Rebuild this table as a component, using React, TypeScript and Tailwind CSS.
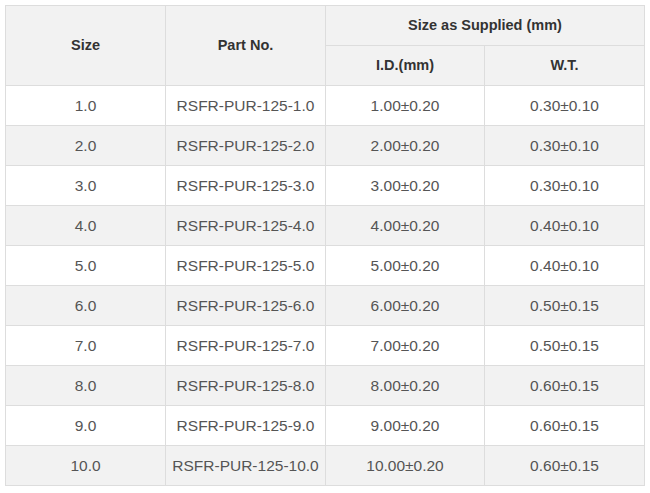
const rows = [
  ['1.0', 'RSFR-PUR-125-1.0', '1.00±0.20', '0.30±0.10'],
  ['2.0', 'RSFR-PUR-125-2.0', '2.00±0.20', '0.30±0.10'],
  ['3.0', 'RSFR-PUR-125-3.0', '3.00±0.20', '0.30±0.10'],
  ['4.0', 'RSFR-PUR-125-4.0', '4.00±0.20', '0.40±0.10'],
  ['5.0', 'RSFR-PUR-125-5.0', '5.00±0.20', '0.40±0.10'],
  ['6.0', 'RSFR-PUR-125-6.0', '6.00±0.20', '0.50±0.15'],
  ['7.0', 'RSFR-PUR-125-7.0', '7.00±0.20', '0.50±0.15'],
  ['8.0', 'RSFR-PUR-125-8.0', '8.00±0.20', '0.60±0.15'],
  ['9.0', 'RSFR-PUR-125-9.0', '9.00±0.20', '0.60±0.15'],
  ['10.0', 'RSFR-PUR-125-10.0', '10.00±0.20', '0.60±0.15'],
];

export default function App() {
  const th = 'border border-[#dddddd] h-10 p-0 text-center font-bold text-[14.5px] text-[#333333]';
  const td = 'border border-[#dddddd] h-10 p-0 text-center font-normal text-[15.5px] text-[#555555]';

  return (
    <div className="bg-white p-[5px] w-[650px] h-[493px]" style={{ fontFamily: '"Liberation Sans", Arial, sans-serif' }}>
      <table className="w-[639px] border-collapse table-fixed border border-[#cccccc]">
        <colgroup>
          <col className="w-[160px]" />
          <col className="w-[160px]" />
          <col className="w-[159px]" />
          <col className="w-[160px]" />
        </colgroup>
        <thead className="bg-[#f2f2f2]">
          <tr>
            <th rowSpan={2} className={th}>Size</th>
            <th rowSpan={2} className={th}>Part No.</th>
            <th colSpan={2} className={th}>Size as Supplied (mm)</th>
          </tr>
          <tr>
            <th className={th}>I.D.(mm)</th>
            <th className={th}>W.T.</th>
          </tr>
        </thead>
        <tbody>
          {rows.map((r, i) => (
            <tr key={r[0]} className={i % 2 === 1 ? 'bg-[#f2f2f2]' : 'bg-white'}>
              {r.map((c, j) => (
                <td key={j} className={td}>{c}</td>
              ))}
            </tr>
          ))}
        </tbody>
      </table>
    </div>
  );
}
